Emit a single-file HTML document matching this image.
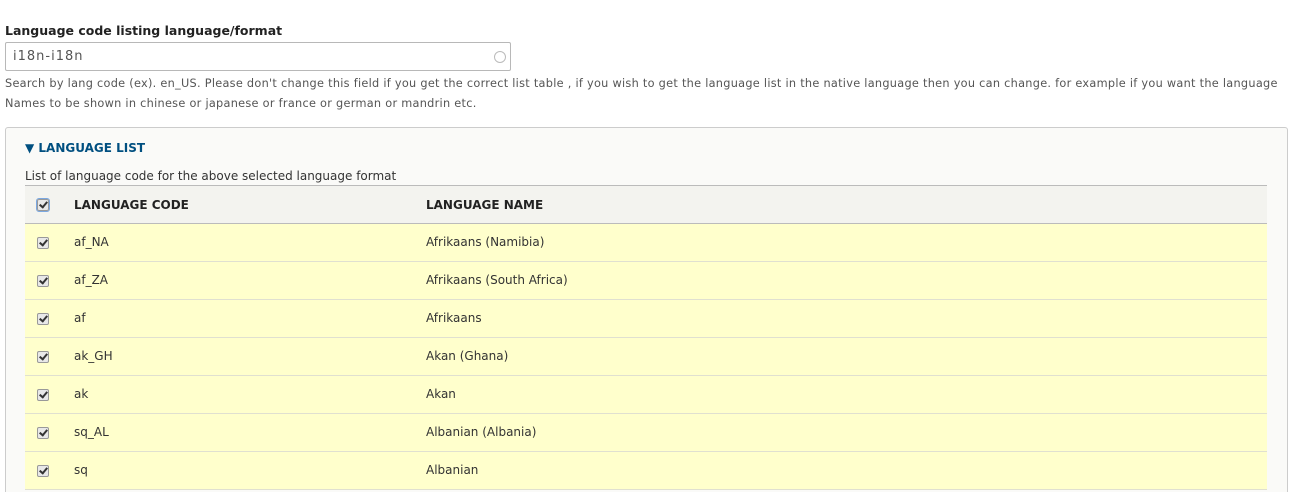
<!DOCTYPE html>
<html><head><style>
html,body{margin:0;width:1304px;height:492px;overflow:hidden}
body{background:#fff;font-family:"DejaVu Sans",Verdana,sans-serif;color:#333;position:relative}
.wrap{position:absolute;left:0;top:0;width:1304px;height:492px;overflow:hidden}
.lbl{position:absolute;left:5px;top:23px;font-weight:bold;font-size:12.5px;color:#222}
.inp{position:absolute;left:5px;top:42px;width:506px;height:29px;border:1px solid #b8b8b8;border-radius:2px;box-sizing:border-box;font-size:13px;color:#555;padding:6px 7px;letter-spacing:1px}
.inp .c{position:absolute;right:4px;top:8px;width:10px;height:10px;border:1.5px solid #bbb;border-radius:50%}
.desc{position:absolute;left:5px;top:74px;font-size:11.3px;line-height:20px;color:#555;letter-spacing:0.28px;white-space:nowrap}
.fs{position:absolute;left:5px;top:127px;width:1283px;height:380px;border:1px solid #ccc;border-radius:3px;background:#fafaf8;box-sizing:border-box}
.sum{position:absolute;left:25px;top:141px;font-size:12px;font-weight:bold;color:#004f80}
.cap{position:absolute;left:25px;top:169px;font-size:12px;color:#333}
table{position:absolute;left:25px;top:185px;width:1242px;border-collapse:collapse;font-size:12px}
th{background:#f3f3ef;height:37px;text-align:left;font-weight:bold;color:#222;border-top:1px solid #bbb;border-bottom:1px solid #bbb;padding:0}
td{background:#ffffcc;height:37px;border-bottom:1px solid #e0e0d0;padding:0;color:#333;vertical-align:middle}
td span.t{position:relative;top:-1px}
.cb{display:inline-block;width:10px;height:10px;border:1px solid #999;border-radius:2px;background:#e8e8e8;margin-left:12px;position:relative;vertical-align:middle}
.cb:after{content:"";position:absolute;left:3px;top:0px;width:3px;height:6px;border:solid #333;border-width:0 2px 2px 0;transform:rotate(40deg)}
th .cb{outline:1px solid #7aa7e0}
</style></head><body><div class="wrap">
<div class="lbl">Language code listing language/format</div>
<div class="inp">i18n-i18n<span class="c"></span></div>
<div class="desc">Search by lang code (ex). en_US. Please don't change this field if you get the correct list table , if you wish to get the language list in the native language then you can change. for example if you want the language<br>Names to be shown in chinese or japanese or france or german or mandrin etc.</div>
<div class="fs"></div>
<div class="sum">▼ LANGUAGE LIST</div>
<div class="cap">List of language code for the above selected language format</div>
<table>
<tr><th style="width:49px"><span class="cb"></span></th><th style="width:352px">LANGUAGE CODE</th><th>LANGUAGE NAME</th></tr>
<tr><td><span class="cb"></span></td><td><span class="t">af_NA</span></td><td><span class="t">Afrikaans (Namibia)</span></td></tr>
<tr><td><span class="cb"></span></td><td><span class="t">af_ZA</span></td><td><span class="t">Afrikaans (South Africa)</span></td></tr>
<tr><td><span class="cb"></span></td><td><span class="t">af</span></td><td><span class="t">Afrikaans</span></td></tr>
<tr><td><span class="cb"></span></td><td><span class="t">ak_GH</span></td><td><span class="t">Akan (Ghana)</span></td></tr>
<tr><td><span class="cb"></span></td><td><span class="t">ak</span></td><td><span class="t">Akan</span></td></tr>
<tr><td><span class="cb"></span></td><td><span class="t">sq_AL</span></td><td><span class="t">Albanian (Albania)</span></td></tr>
<tr><td><span class="cb"></span></td><td><span class="t">sq</span></td><td><span class="t">Albanian</span></td></tr>
</table>
</div></body></html>
